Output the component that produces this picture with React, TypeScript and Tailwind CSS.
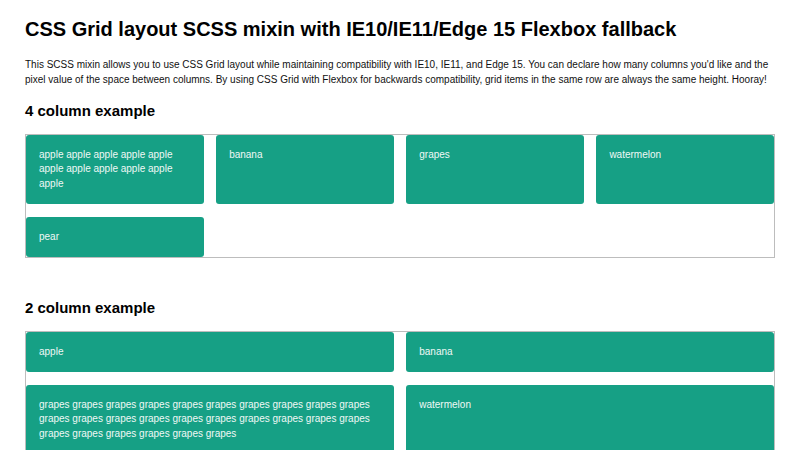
const fourCol = [
  "apple apple apple apple apple apple apple apple apple apple apple",
  "banana",
  "grapes",
  "watermelon",
  "pear",
];

const twoCol = [
  "apple",
  "banana",
  Array(26).fill("grapes").join(" "),
  "watermelon",
];

function GridItem({ children }: { children: string }) {
  return (
    <div className="rounded-[3px] bg-[#16a085] px-[13px] py-[12.75px] text-[10px] leading-[14.5px] text-[#f0f8f5]">
      {children}
    </div>
  );
}

export default function App() {
  return (
    <div className="min-h-screen bg-white px-[25px] pt-[15px] text-black [font-family:'Liberation_Sans',Arial,sans-serif]">
      <h1 className="text-[20px] font-bold leading-[28px]">
        CSS Grid layout SCSS mixin with IE10/IE11/Edge 15 Flexbox fallback
      </h1>
      <p className="mt-[14px] text-[10px] leading-[15px] text-[#111]">
        This SCSS mixin allows you to use CSS Grid layout while maintaining compatibility with IE10, IE11, and Edge 15. You
        can declare how many columns you'd like and the pixel value of the space between columns. By using CSS Grid with
        Flexbox for backwards compatibility, grid items in the same row are always the same height. Hooray!
      </p>

      <h2 className="mt-[13px] text-[15px] font-bold leading-[22px]">4 column example</h2>
      <div className="mt-[12px] grid grid-cols-4 gap-x-[12.5px] gap-y-[13px] border border-[#bdbdbd]">
        {fourCol.map((t, i) => (
          <GridItem key={i}>{t}</GridItem>
        ))}
      </div>

      <h2 className="mt-[39px] text-[15px] font-bold leading-[22px]">2 column example</h2>
      <div className="mt-[12px] grid grid-cols-2 gap-x-[12.5px] gap-y-[13px] border border-[#bdbdbd]">
        {twoCol.map((t, i) => (
          <GridItem key={i}>{t}</GridItem>
        ))}
      </div>
    </div>
  );
}
